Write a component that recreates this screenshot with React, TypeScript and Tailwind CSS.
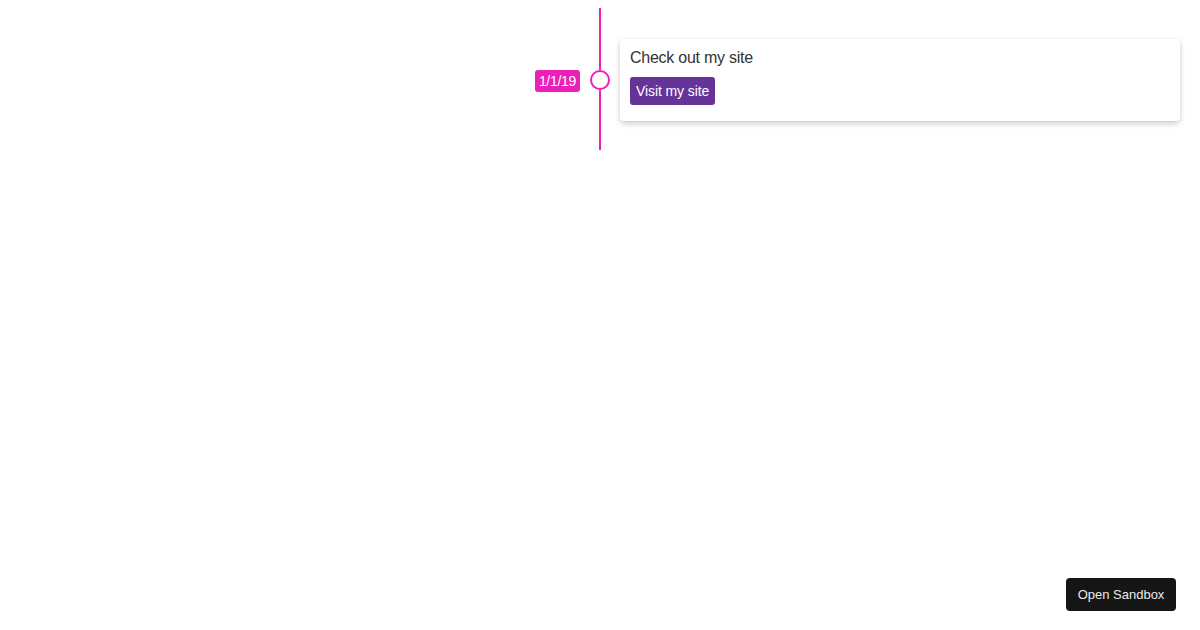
import React from "react";

export default function App() {
  return (
    <div className="relative w-[1200px] h-[630px] bg-white font-['Liberation_Sans',Arial,sans-serif] overflow-hidden">
      {/* Timeline row */}
      <div className="flex pt-2">
        {/* Date */}
        <div className="w-[580px] flex justify-end items-start pt-[62px]">
          <span className="bg-[#ec1fb8] text-white text-[14px] tracking-[-0.3px] leading-[22px] px-[4px] rounded-[3px]">
            1/1/19
          </span>
        </div>

        {/* Line + dot */}
        <div className="w-[40px] flex flex-col items-center">
          <div className="w-[2px] h-[62px] bg-[#ec1fb8]" />
          <div className="w-[20px] h-[20px] rounded-full border-2 border-[#ec1fb8] bg-white" />
          <div className="w-[2px] h-[60px] bg-[#ec1fb8]" />
        </div>

        {/* Card */}
        <div className="w-[560px] mt-[31px] self-start bg-white rounded-[4px] shadow-[0_3px_6px_rgba(0,0,0,0.18),0_0_3px_rgba(0,0,0,0.06)] pt-[9px] pb-[16px] px-[10px]">
          <p className="text-[16px] tracking-[-0.25px] leading-[20px] text-[#333]">Check out my site</p>
          <button
            type="button"
            className="mt-[9px] bg-[#663399] text-white text-[14px] tracking-[-0.1px] leading-[28px] px-[6px] rounded-[3px]"
          >
            Visit my site
          </button>
        </div>
      </div>

      {/* Sandbox button */}
      <button
        type="button"
        className="absolute right-[24px] bottom-[19px] w-[110px] h-[33px] bg-[#151515] text-[#eaeaea] text-[13px] rounded-[4px]"
      >
        Open Sandbox
      </button>
    </div>
  );
}
